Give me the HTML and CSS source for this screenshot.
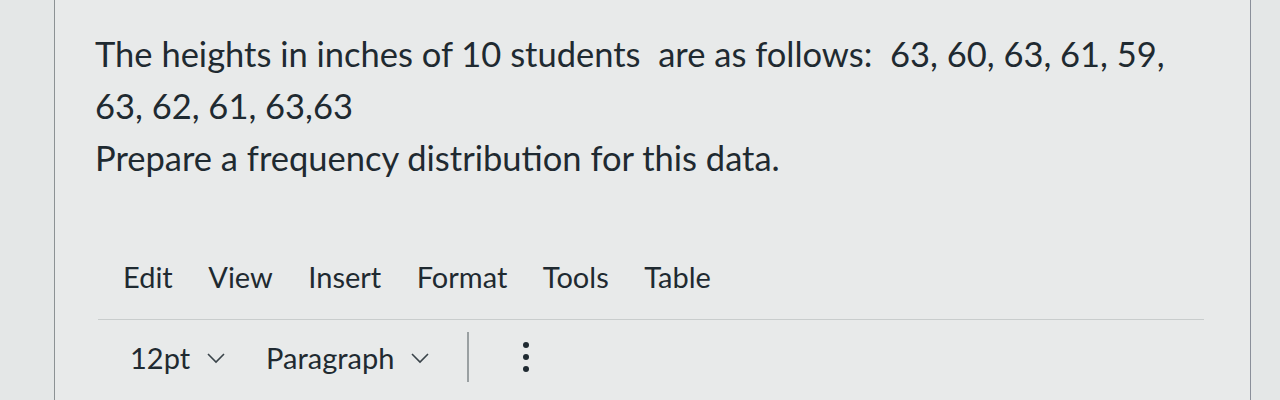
FILE: index.html
```html
<!DOCTYPE html>
<html>
<head>
<meta charset="utf-8">
<link rel="stylesheet" href="styles.css">
</head>
<body>
<div class="page">
  <div class="card">
    <div class="question">
      <p class="line">The heights in inches of 10 students&nbsp; are as follows:&nbsp; 63, 60, 63, 61, 59,</p>
      <p class="line">63, 62, 61, 63,63</p>
      <p class="line">Prepare a frequency distribution for this data.</p>
    </div>
    <div class="editor">
      <div class="menubar">
        <span class="menu">Edit</span>
        <span class="menu">View</span>
        <span class="menu">Insert</span>
        <span class="menu">Format</span>
        <span class="menu">Tools</span>
        <span class="menu">Table</span>
      </div>
      <div class="toolbar">
        <span class="dropdown size">12pt
          <svg class="chev" width="20" height="12" viewBox="0 0 20 12"><path d="M2 2 L10 10 L18 2" fill="none" stroke="#3a444a" stroke-width="1.6"/></svg>
        </span>
        <span class="dropdown para">Paragraph
          <svg class="chev" width="20" height="12" viewBox="0 0 20 12"><path d="M2 2 L10 10 L18 2" fill="none" stroke="#3a444a" stroke-width="1.6"/></svg>
        </span>
        <span class="divider"></span>
        <span class="kebab"><i></i><i></i><i></i></span>
      </div>
    </div>
  </div>
</div>
</body>
</html>
```
FILE: styles.css
```css
html, body {
  margin: 0;
  padding: 0;
  background: #e4e7e7;
  height: 400px;
  overflow: hidden;
}
.page {
  height: 400px;
  padding-left: 54px;
  width: 1197px;
}
.card {
  height: 400px;
  border-left: 1.5px solid #8c9294;
  border-right: 1.5px solid #8a8f9a;
  background: #e8eaea;
  font-family: Lato, "Noto Sans", sans-serif;
  color: #1f2a31;
}
.question {
  padding: 28px 0 0 40px;
}
.line {
  margin: 0;
  font-size: 34.5px;
  line-height: 52px;
  white-space: nowrap;
}
.editor {
  margin: 73px 46px 0 43px;
}
.menubar {
  display: flex;
  gap: 35.5px;
  padding-left: 25px;
  font-size: 29px;
  line-height: 40px;
  padding-bottom: 22px;
  border-bottom: 1.5px solid #c9cdcd;
}
.toolbar {
  display: flex;
  align-items: center;
  height: 74px;
  padding-left: 32px;
  font-size: 29px;
}
.dropdown {
  display: flex;
  align-items: center;
  gap: 16px;
}
.size {
  margin-right: 40px;
}
.para {
  margin-right: 37px;
}
.chev {
  margin-top: 2px;
}
.divider {
  width: 1.5px;
  height: 50px;
  background: #9aa0a2;
  margin-right: 54px;
}
.kebab {
  display: flex;
  flex-direction: column;
  gap: 6px;
}
.kebab i {
  display: block;
  width: 6px;
  height: 6px;
  border-radius: 50%;
  background: #1f2a31;
}
```
